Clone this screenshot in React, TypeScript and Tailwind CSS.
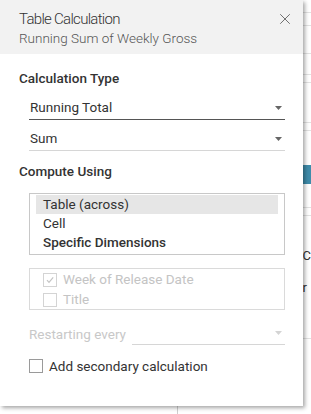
import { X } from "lucide-react";

function Caret({ faded = false }: { faded?: boolean }) {
  return (
    <svg width="7" height="4" viewBox="0 0 7 4" className={faded ? "text-[#d4d4d4]" : "text-[#666]"}>
      <path d="M0 0h7L3.5 4z" fill="currentColor" />
    </svg>
  );
}

function Box({ checked = false, faded = false }: { checked?: boolean; faded?: boolean }) {
  return (
    <div
      className={`w-[14px] h-[14px] border flex items-center justify-center ${
        faded ? "border-[#d4d4d4]" : "border-[#9a9a9a]"
      } bg-white`}
    >
      {checked && (
        <svg width="10" height="10" viewBox="0 0 10 10">
          <path d="M2 5.2l2 2.2L8.2 2.4" fill="none" stroke="#c4c4c4" strokeWidth="1.2" />
        </svg>
      )}
    </div>
  );
}

export default function App() {
  return (
    <div
      className="relative w-[311px] h-[414px] bg-white overflow-hidden text-[#333]"
      style={{ fontFamily: "Roboto, Lato, sans-serif" }}
    >
      {/* Underlying page peeking out */}
      <div className="flex h-full">
        <div className="w-[303px] flex flex-col">
          <div className="flex-1" />
          <div className="flex h-[14px]">
            <div className="w-[177px]" />
            <div className="w-px bg-[#cfcfcf]" />
          </div>
        </div>
        <div className="flex-1 flex flex-col">
          <div className="h-[12px]" />
          <div className="h-px bg-[#e2e2e2]" />
          <div className="h-[12px]" />
          <div className="h-px bg-[#e2e2e2]" />
          <div className="h-[27px]" />
          <div className="h-px bg-[#e2e2e2]" />
          <div className="h-[20px]" />
          <div className="h-px bg-[#e2e2e2]" />
          <div className="h-[7px]" />
          <div className="h-px bg-[#e2e2e2]" />
          <div className="h-[39px]" />
          <div className="h-px bg-[#e2e2e2]" />
          <div className="h-[7px]" />
          <div className="h-px bg-[#e2e2e2]" />
          <div className="h-[34px]" />
          <div className="h-[19px] bg-[#3f8caa]" />
          <div className="h-[23px]" />
          <div className="h-px bg-[#e2e2e2]" />
          <div className="h-[7px]" />
          <div className="h-px bg-[#e2e2e2]" />
          <div className="h-[32px]" />
          <div className="text-[13px] leading-[16px] pl-[1px] text-[#333]">C</div>
          <div className="h-[16px]" />
          <div className="text-[13px] leading-[16px] pl-[1px] text-[#333]">r</div>
          <div className="h-[42px]" />
          <div className="h-px bg-[#e2e2e2]" />
        </div>
      </div>

      {/* Dialog */}
      <div className="absolute left-0 top-0 w-[303px] h-[406px] bg-white shadow-[2px_2px_4px_rgba(0,0,0,0.35)] flex flex-col">
        <div className="h-[54px] bg-[#f2f2f2] flex items-start justify-between pl-[19px] pr-[9px] pt-[8px]">
          <div>
            <div className="text-[15px] font-light tracking-[-0.7px] leading-[22px] text-[#333]">Table Calculation</div>
            <div className="text-[13.5px] font-light leading-[17px] text-[#555]">Running Sum of Weekly Gross</div>
          </div>
          <X size={18} strokeWidth={1.1} className="text-[#555] mt-[2px]" />
        </div>

        <div className="flex flex-col pl-[19px] pr-[18px] pt-[15px] text-[13.5px]">
          <div className="font-medium leading-[18px] text-[#333]">Calculation Type</div>

          <div className="ml-[10px] mt-[9px] flex items-center justify-between h-[24px] border-b border-[#555] pl-[1px] pr-[3px]">
            <span>Running Total</span>
            <Caret />
          </div>
          <div className="ml-[10px] mt-[7px] flex items-center justify-between h-[24px] border-b border-[#d6d6d6] pl-[1px] pr-[3px]">
            <span>Sum</span>
            <Caret />
          </div>

          <div className="font-medium leading-[18px] mt-[11px] text-[#333]">Compute Using</div>

          <div className="ml-[10px] mt-[13px] border border-[#c8c8c8] px-[6px] pt-[1px] pb-[3px] h-[62px]">
            <div className="bg-[#e6e6e6] h-[19px] flex items-center pl-[7px]">Table (across)</div>
            <div className="h-[19px] flex items-center pl-[7px]">Cell</div>
            <div className="h-[19px] flex items-center pl-[7px] font-medium">Specific Dimensions</div>
          </div>

          <div className="ml-[10px] mt-[13px] border border-[#dadada] h-[42px] pl-[13px] pt-[3px] flex flex-col gap-[5px]">
            <div className="flex items-center gap-[6px] h-[15px]">
              <Box checked faded />
              <span className="text-[#c4c4c4]">Week of Release Date</span>
            </div>
            <div className="flex items-center gap-[6px] h-[15px]">
              <Box faded />
              <span className="text-[#c4c4c4]">Title</span>
            </div>
          </div>

          <div className="ml-[10px] mt-[11px] flex items-end gap-[6px]">
            <span className="text-[#c8c8c8] leading-[22px]">Restarting every</span>
            <div className="flex-1 h-[24px] border-b border-[#d6d6d6] flex items-center justify-end pr-[3px]">
              <Caret faded />
            </div>
          </div>

          <div className="ml-[10px] mt-[11px] flex items-center gap-[6px]">
            <Box />
            <span className="text-[#333]">Add secondary calculation</span>
          </div>
        </div>
      </div>
    </div>
  );
}
